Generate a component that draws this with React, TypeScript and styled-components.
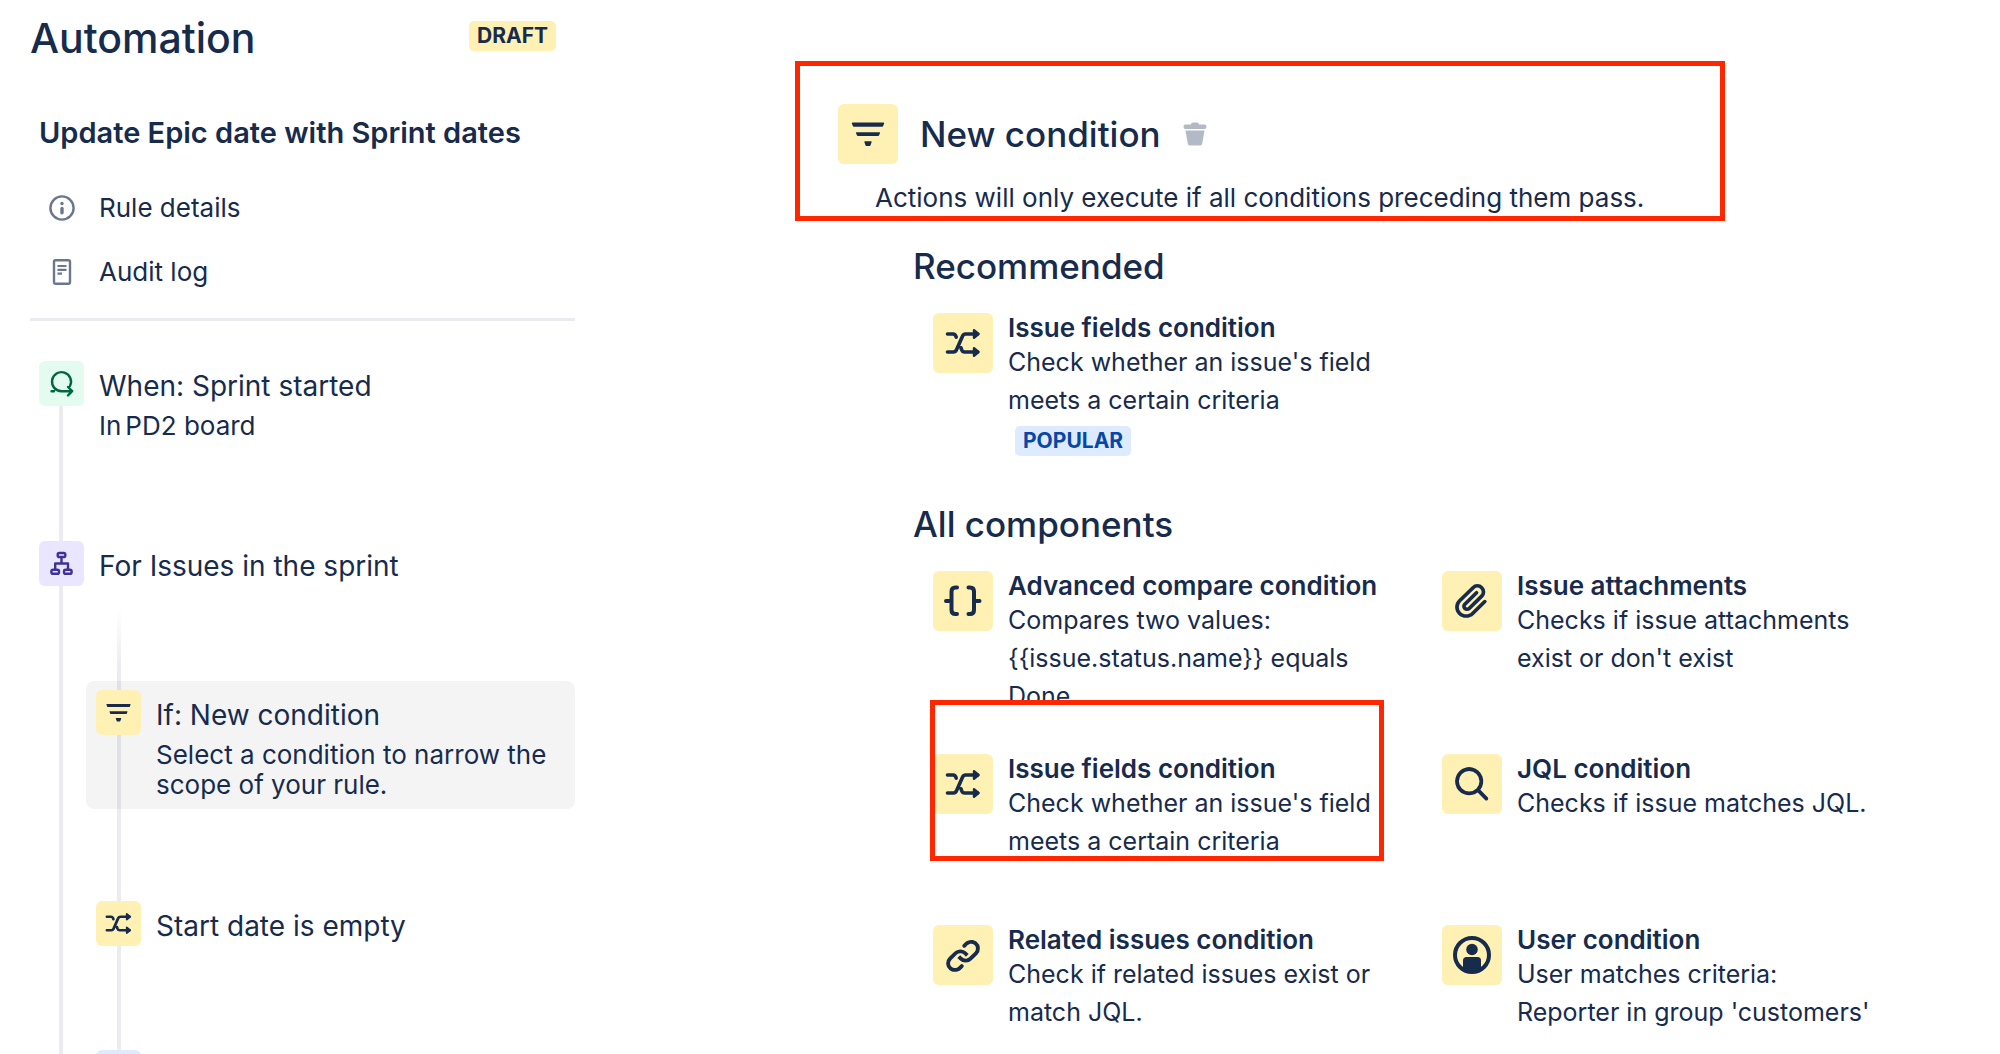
import React from "react";
import styled, { createGlobalStyle } from "styled-components";

const color = {
  text: "#172b4d",
  muted: "#6b778c",
  faint: "#b3bac5",
  line: "#ebecf0",
  yellow: "#fff0b3",
  green: "#e3fcef",
  purple: "#eae6ff",
  blue: "#deebff",
  mark: "#ff2600",
};

const GlobalStyle = createGlobalStyle`
  *, *::before, *::after { box-sizing: border-box; }
  body {
    margin: 0;
    background: #ffffff;
    color: ${color.text};
    font-family: Inter, "Liberation Sans", sans-serif;
    font-size: 25px;
  }
  h1, h2, p { margin: 0; padding: 0; }
  button { border: 0; padding: 0; margin: 0; background: none; color: inherit; font: inherit; text-align: left; cursor: pointer; }
  svg { display: block; }
`;

const Page = styled.div`
  display: grid;
  grid-template-columns: 575px minmax(0, 1fr);
  height: 100vh;
  overflow: hidden;
`;

const Sidebar = styled.aside`
  display: flex;
  flex-direction: column;
  padding: 16px 0 0 30px;
`;

const SidebarHead = styled.header`
  display: flex;
  justify-content: space-between;
  align-items: center;
  padding-right: 19px;
  height: 40px;
`;

const PageTitle = styled.h1`
  padding-top: 4px;
  font-size: 41px;
  line-height: 48px;
  font-weight: 500;
`;

const Lozenge = styled.span<{ $tone: "draft" | "popular" }>`
  display: inline-flex;
  align-items: center;
  justify-content: center;
  height: 30px;
  padding: 0 8px;
  border-radius: 5px;
  background: ${(p) => (p.$tone === "draft" ? color.yellow : color.blue)};
  color: ${(p) => (p.$tone === "draft" ? color.text : "#0747a6")};
  font-size: 21px;
  line-height: 30px;
  font-weight: 700;
`;

const RuleName = styled.h2`
  margin-top: 57px;
  padding-left: 9px;
  font-size: 29px;
  line-height: 40px;
  font-weight: 600;
`;

const RuleLinks = styled.nav`
  display: flex;
  flex-direction: column;
  gap: 24px;
  margin-top: 35px;
  padding: 0 0 26px 9px;
  border-bottom: 3px solid ${color.line};
`;

const RuleLink = styled.button`
  display: grid;
  grid-template-columns: 45px 1fr;
  gap: 15px;
  align-items: center;
  font-size: 26px;
  line-height: 40px;
  svg { justify-self: center; }
`;

const Flow = styled.div`
  position: relative;
  flex: 1;
  padding: 40px 0 0 9px;
  &::before {
    content: "";
    position: absolute;
    left: 29px;
    top: 40px;
    bottom: 0;
    width: 4px;
    background: ${color.line};
  }
`;

const Branch = styled.div`
  position: relative;
  margin-left: 47px;
  padding-top: 73px;
  min-height: 446px;
  &::before {
    content: "";
    position: absolute;
    left: 31px;
    top: 0;
    bottom: 0;
    width: 4px;
    background: linear-gradient(rgba(235, 236, 240, 0), ${color.line} 60px);
  }
`;

const Step = styled.button<{ $gap?: number; $selected?: boolean; $nested?: boolean }>`
  position: relative;
  display: grid;
  grid-template-columns: 45px minmax(0, 1fr);
  gap: 15px;
  align-items: start;
  width: 100%;
  margin-bottom: ${(p) => p.$gap ?? 0}px;
  padding: ${(p) => (p.$nested ? "9px 10px" : "0")};
  border-radius: 8px;
  background: ${(p) => (p.$selected ? "rgba(9, 10, 20, 0.045)" : "none")};
`;

const StepBody = styled.span`
  display: block;
`;

const StepTitle = styled.span`
  display: block;
  padding-top: 5px;
  font-size: 28px;
  line-height: 40px;
`;

const StepText = styled.span`
  display: block;
  padding-top: 5px;
  font-size: 26px;
  line-height: 30px;
`;

const Tight = styled.span`
  margin-right: 4px;
`;

const Tile = styled.span<{ $size: number; $bg: string; $fg?: string }>`
  display: block;
  flex: none;
  width: ${(p) => p.$size}px;
  height: ${(p) => p.$size}px;
  border-radius: 6px;
  background: ${(p) => p.$bg};
  color: ${(p) => p.$fg ?? color.text};
  svg { width: 100%; height: 100%; }
`;

const Main = styled.main`
  display: flex;
  flex-direction: column;
  padding: 61px 107px 0 220px;
`;

const Intro = styled.header`
  width: 100%;
  max-width: 930px;
  height: 160px;
  padding: 38px 38px 0;
  border: 5px solid ${color.mark};
`;

const IntroRow = styled.div`
  display: flex;
  align-items: center;
  gap: 22px;
`;

const Heading = styled.h2`
  font-size: 35px;
  line-height: 46px;
  font-weight: 500;
`;

const IntroText = styled.p`
  padding: 15px 0 0 37px;
  font-size: 26px;
  line-height: 38px;
  white-space: nowrap;
`;

const Section = styled.section<{ $gap: number }>`
  margin-top: ${(p) => p.$gap}px;
  padding-left: 118px;
`;

const Cards = styled.div`
  display: grid;
  grid-template-columns: repeat(2, minmax(0, 1fr));
  column-gap: 58px;
  row-gap: 51px;
  padding: 24px 0 0 20px;
`;

const Card = styled.button<{ $tall?: boolean }>`
  position: relative;
  display: flex;
  align-items: flex-start;
  gap: 15px;
  min-height: 120px;
  height: ${(p) => (p.$tall ? "132px" : "auto")};
`;

const CardBody = styled.span`
  display: block;
  flex: 1;
  min-width: 0;
`;

const CardTitle = styled.span`
  display: block;
  font-size: 26px;
  line-height: 30px;
  font-weight: 600;
`;

const CardText = styled.span`
  display: block;
  padding-right: 10px;
  font-size: 25px;
  line-height: 38px;
`;

const CardBadge = styled.span`
  display: block;
  padding: 5px 0 0 7px;
`;

const Marker = styled.span`
  position: absolute;
  inset: -54px 0 13px -3px;
  border: 5px solid ${color.mark};
  pointer-events: none;
`;

const Trash = styled.button`
  color: ${color.faint};
`;

const FilterIcon = () => (
  <svg viewBox="0 0 60 60" fill="currentColor" aria-hidden="true">
    <path d="M14.500 18.500h31q.9 0 .6.9l-.9 2.600q-.3.800-1 .8h-28.400q-.7 0-1-.8l-.9-2.600q-.3-.9.6-.9zM18.500 28.300h23q.8 0 .5.800l-.9 2.200q-.3.800-1 .8h-20.200q-.7 0-1-.8l-.9-2.200q-.3-.8.500-.8zM27 37.300h6q.9 0 .6.9l-1.200 3.200q-.3.700-1 .7h-2.800q-.7 0-1-.7l-1.200-3.200q-.3-.9.600-.9z" />
  </svg>
);

const ShuffleIcon = () => (
  <svg viewBox="0 0 60 60" fill="none" stroke="currentColor" strokeWidth="3.600" strokeLinecap="round" strokeLinejoin="round" aria-hidden="true">
    <path d="M14.500 39H20.500q2 0 3-2.200l6-13.600q1-2.200 3-2.200H44.500M14.500 21H20q2.600 0 3.200 3.200M28 34.800l.6 1.800q.9 2.400 3.100 2.400H44.500" />
    <path d="M41 17.300l4.600 3.700-4.600 3.700zM41 35.300l4.600 3.700-4.600 3.700z" fill="currentColor" strokeWidth="2.400" />
  </svg>
);

const BracesIcon = () => (
  <svg viewBox="0 0 60 60" fill="none" stroke="currentColor" strokeWidth="4" strokeLinecap="round" strokeLinejoin="round" aria-hidden="true">
    <path d="M24 16.500h-1.500q-4 0-4 4v18.500q0 4 4 4H24M18 30h-5M35.500 16.500H37q4 0 4 4v18.500q0 4-4 4h-1.500M41.500 30h5" />
  </svg>
);

const GlyphIcon = ({ d }: { d: string }) => (
  <svg viewBox="-4 -4 32 32" fill="currentColor" fillRule="evenodd" aria-hidden="true">
    <path d={d} />
  </svg>
);

const ClipIcon = () => (
  <GlyphIcon d="M11.643 17.965c-1.530 1.495-4.016 1.496-5.542.004a3.773 3.773 0 0 1 .002-5.412l7.147-6.985a2.316 2.316 0 0 1 3.233-.003c.893.873.895 2.282.004 3.153l-6.703 6.550a.653.653 0 0 1-.914-.008.620.620 0 0 1 .010-.902l6.229-6.087a.941.941 0 0 0 0-1.353.995.995 0 0 0-1.384 0l-6.230 6.087a2.502 2.502 0 0 0-.010 3.607 2.683 2.683 0 0 0 3.683.009l6.703-6.550a4.074 4.074 0 0 0-.003-5.859 4.306 4.306 0 0 0-6.002.003l-7.148 6.985a5.655 5.655 0 0 0-.001 8.118c2.290 2.237 6.015 2.238 8.308-.004l6.502-6.353a.940.940 0 0 0 0-1.353.995.995 0 0 0-1.384 0l-6.502 6.353z" />
);

const SearchIcon = () => (
  <GlyphIcon d="M16.436 15.085l3.940 4.010a1 1 0 0 1-1.425 1.402l-3.938-4.006a7.500 7.500 0 1 1 1.423-1.406zM10.500 16a5.500 5.500 0 1 0 0-11 5.500 5.500 0 0 0 0 11z" />
);

const LinkIcon = () => (
  <GlyphIcon d="M12.856 5.457l-.937.920a1.002 1.002 0 0 0 0 1.437 1.047 1.047 0 0 0 1.463 0l.984-.966c.967-.950 2.542-1.135 3.602-.288a2.540 2.540 0 0 1 .203 3.810l-2.903 2.852a2.646 2.646 0 0 1-3.696 0l-1.110-1.090L9 13.570l1.108 1.089c1.822 1.788 4.802 1.788 6.622 0l2.905-2.852a4.558 4.558 0 0 0-.357-6.820c-1.893-1.517-4.695-1.226-6.422.470zM11.144 19.543l.937-.920a1.002 1.002 0 0 0 0-1.437 1.047 1.047 0 0 0-1.462 0l-.985.966c-.967.950-2.542 1.135-3.602.288a2.540 2.540 0 0 1-.203-3.810l2.903-2.852a2.646 2.646 0 0 1 3.696 0l1.110 1.090L15 11.430l-1.108-1.089c-1.822-1.788-4.802-1.788-6.622 0l-2.905 2.852a4.558 4.558 0 0 0 .357 6.820c1.893 1.517 4.695 1.226 6.422-.470z" />
);

const UserIcon = () => (
  <svg viewBox="0 0 60 60" aria-hidden="true">
    <circle cx="30" cy="30" r="17" fill="none" stroke="currentColor" strokeWidth="4" />
    <circle cx="30" cy="24.500" r="5.800" fill="currentColor" />
    <path d="M21 44v-8.500q0-3.500 3.500-3.500h11q3.500 0 3.500 3.500V44q-4 3.500-9 3.500T21 44z" fill="currentColor" />
  </svg>
);

const SprintIcon = () => (
  <svg viewBox="0 0 45 45" fill="none" stroke="currentColor" strokeWidth="2.400" strokeLinecap="round" strokeLinejoin="round" aria-hidden="true">
    <path d="M31 25A9.500 9.500 0 1 0 22.500 30.200H33M29 26l4.200 4.200L29 34.400M12.500 30.200h2.500" />
  </svg>
);

const TreeIcon = () => (
  <svg viewBox="0 0 45 45" fill="none" stroke="currentColor" strokeWidth="2.400" strokeLinejoin="round" aria-hidden="true">
    <rect x="18.700" y="12" width="7.600" height="4" rx="1.600" />
    <rect x="12.400" y="28.800" width="7.600" height="4" rx="1.600" />
    <rect x="25" y="28.800" width="7.600" height="4" rx="1.600" />
    <path d="M22.500 16.500v6M16.200 28.500v-6h12.800v6" />
  </svg>
);

const InfoIcon = () => (
  <svg width="26" height="26" viewBox="0 0 26 26" aria-hidden="true">
    <circle cx="13" cy="13" r="11.600" fill="none" stroke={color.muted} strokeWidth="2.400" />
    <circle cx="13" cy="8.500" r="1.700" fill={color.muted} />
    <path d="M13 13.500v4.200" stroke={color.muted} strokeWidth="3.400" strokeLinecap="round" />
  </svg>
);

const LogIcon = () => (
  <svg width="20" height="26" viewBox="0 0 20 26" fill="none" stroke={color.muted} aria-hidden="true">
    <rect x="2" y="1.200" width="16" height="23.600" rx="1.500" strokeWidth="2.400" />
    <path d="M5.500 7h9M5.500 10.800h9M5.500 14.600h4.500" strokeWidth="2.200" />
  </svg>
);

const TrashIcon = () => (
  <svg width="24" height="24" viewBox="0 0 24 24" fill="currentColor" aria-hidden="true">
    <path d="M8 2.500Q8 .5 10 .5h4q2 0 2 2h5.500q2 0 2 2.200T21.500 7h-19Q.5 7 .5 4.700t2-2.200zM2.500 8.500h19l-2.300 13.200q-.3 1.800-2 1.800H6.800q-1.700 0-2-1.800z" />
  </svg>
);

type CardData = {
  title: string;
  text: string;
  icon: React.ReactNode;
  marked?: boolean;
  tall?: boolean;
  popular?: boolean;
};

const components: CardData[] = [
  {
    title: "Advanced compare condition",
    text: "Compares two values: {{issue.status.name}} equals Done",
    icon: <BracesIcon />,
    tall: true,
  },
  { title: "Issue attachments", text: "Checks if issue attachments exist or don't exist", icon: <ClipIcon /> },
  {
    title: "Issue fields condition",
    text: "Check whether an issue's field meets a certain criteria",
    icon: <ShuffleIcon />,
    marked: true,
  },
  { title: "JQL condition", text: "Checks if issue matches JQL.", icon: <SearchIcon /> },
  { title: "Related issues condition", text: "Check if related issues exist or match JQL.", icon: <LinkIcon /> },
  { title: "User condition", text: "User matches criteria: Reporter in group 'customers'", icon: <UserIcon /> },
];

const ComponentCard = ({ title, text, icon, marked, tall, popular }: CardData) => (
  <Card type="button" $tall={tall}>
    <Tile $size={60} $bg={color.yellow}>{icon}</Tile>
    <CardBody>
      <CardTitle>{title}</CardTitle>
      <CardText>{text}</CardText>
      {popular && (
        <CardBadge>
          <Lozenge $tone="popular">POPULAR</Lozenge>
        </CardBadge>
      )}
    </CardBody>
    {marked && <Marker />}
  </Card>
);

export default function App() {
  return (
    <>
      <GlobalStyle />
      <Page>
        <Sidebar>
          <SidebarHead>
            <PageTitle>Automation</PageTitle>
            <Lozenge $tone="draft">DRAFT</Lozenge>
          </SidebarHead>
          <RuleName>Update Epic date with Sprint dates</RuleName>
          <RuleLinks>
            <RuleLink type="button">
              <InfoIcon />
              <span>Rule details</span>
            </RuleLink>
            <RuleLink type="button">
              <LogIcon />
              <span>Audit log</span>
            </RuleLink>
          </RuleLinks>
          <Flow>
            <Step type="button" $gap={100}>
              <Tile $size={45} $bg={color.green} $fg="#006644"><SprintIcon /></Tile>
              <StepBody>
                <StepTitle>When: Sprint started</StepTitle>
                <StepText><Tight>In</Tight>PD2 board</StepText>
              </StepBody>
            </Step>
            <Step type="button" $gap={22}>
              <Tile $size={45} $bg={color.purple} $fg="#403294"><TreeIcon /></Tile>
              <StepBody>
                <StepTitle>For Issues in the sprint</StepTitle>
              </StepBody>
            </Step>
            <Branch>
              <Step type="button" $nested $selected $gap={83}>
                <Tile $size={45} $bg={color.yellow}><FilterIcon /></Tile>
                <StepBody>
                  <StepTitle>If: New condition</StepTitle>
                  <StepText>Select a condition to narrow the scope of your rule.</StepText>
                </StepBody>
              </Step>
              <Step type="button" $nested $gap={86}>
                <Tile $size={45} $bg={color.yellow}><ShuffleIcon /></Tile>
                <StepBody>
                  <StepTitle>Start date is empty</StepTitle>
                </StepBody>
              </Step>
              <Step type="button" $nested aria-label="Next step">
                <Tile $size={45} $bg={color.blue} />
              </Step>
            </Branch>
          </Flow>
        </Sidebar>
        <Main>
          <Intro>
            <IntroRow>
              <Tile $size={60} $bg={color.yellow}><FilterIcon /></Tile>
              <Heading>New condition</Heading>
              <Trash type="button" aria-label="Delete condition"><TrashIcon /></Trash>
            </IntroRow>
            <IntroText>Actions will only execute if all conditions preceding them pass.</IntroText>
          </Intro>
          <Section $gap={22}>
            <Heading>Recommended</Heading>
            <Cards>
              <ComponentCard
                title="Issue fields condition"
                text="Check whether an issue's field meets a certain criteria"
                icon={<ShuffleIcon />}
                popular
              />
            </Cards>
          </Section>
          <Section $gap={45}>
            <Heading>All components</Heading>
            <Cards>
              {components.map((item) => (
                <ComponentCard key={item.title} {...item} />
              ))}
            </Cards>
          </Section>
        </Main>
      </Page>
    </>
  );
}
